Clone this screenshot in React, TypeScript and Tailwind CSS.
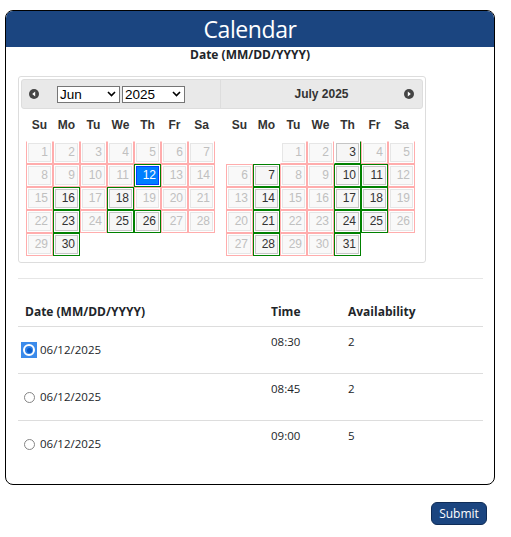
import React from 'react'

type DayKind = 'off' | 'open' | 'selected' | 'plain'

interface MonthData {
  title: string
  startDay: number
  days: number
  open: number[]
  selected?: number
  plain?: number[]
}

const june: MonthData = {
  title: 'June 2025',
  startDay: 0,
  days: 30,
  open: [16, 18, 23, 25, 26, 30],
  selected: 12,
}

const july: MonthData = {
  title: 'July 2025',
  startDay: 2,
  days: 31,
  open: [7, 10, 11, 14, 17, 18, 21, 24, 25, 28, 31],
  plain: [3],
}

const weekDays = ['Su', 'Mo', 'Tu', 'We', 'Th', 'Fr', 'Sa']

const slots = [
  { date: '06/12/2025', time: '08:30', available: 2, checked: true },
  { date: '06/12/2025', time: '08:45', available: 2, checked: false },
  { date: '06/12/2025', time: '09:00', available: 5, checked: false },
]

function NavIcon({ dir }: { dir: 'prev' | 'next' }) {
  return (
    <svg width="12" height="12" viewBox="0 0 12 12">
      <circle cx="6" cy="6" r="5" fill="#454545" />
      {dir === 'prev' ? (
        <polygon points="7.2,3.6 7.2,8.4 4.2,6" fill="#ffffff" />
      ) : (
        <polygon points="4.8,3.6 4.8,8.4 7.8,6" fill="#ffffff" />
      )}
    </svg>
  )
}

function FakeSelect({ value }: { value: string }) {
  return (
    <div className="flex h-[17px] w-[63px] items-center justify-between border border-[#767676] bg-white pl-[2px] pr-[3px] text-[13.5px] leading-[15px] text-black">
      <span>{value}</span>
      <svg width="9" height="6" viewBox="0 0 9 6">
        <polyline points="1,1 4.5,4.5 8,1" fill="none" stroke="#000" strokeWidth="1.6" />
      </svg>
    </div>
  )
}

function DayCell({ day, kind, firstRow, leftEmpty }: { day: number; kind: DayKind; firstRow: boolean; leftEmpty: boolean }) {
  let outer = 'h-[23px] border p-[1px] '
  if (kind === 'off') outer += 'border-[#ffadad]'
  else if (kind === 'plain') outer += 'border-white border-r-[#008000] border-b-[#008000]'
  else outer += 'border-[#008000]'
  if (firstRow && kind === 'off') outer += ' border-t-white'
  if (leftEmpty && kind === 'off') outer += ' border-l-white'

  let inner = 'h-full border pr-[2px] text-right text-[12px] leading-[17px] '
  if (kind === 'off') inner += 'border-[#e6e6e6] bg-[#f9f9f9] text-[#c0c0c0]'
  else if (kind === 'selected') inner += 'border-[#003eff] bg-[#007fff] text-white'
  else inner += 'border-[#c5c5c5] bg-[#f6f6f6] text-[#333333]'

  return (
    <div className={outer}>
      <div className={inner}>{day}</div>
    </div>
  )
}

function MonthGrid({ month }: { month: MonthData }) {
  const cells: (number | null)[] = []
  for (let i = 0; i < month.startDay; i++) cells.push(null)
  for (let d = 1; d <= month.days; d++) cells.push(d)
  while (cells.length % 7 !== 0) cells.push(null)

  const kindOf = (d: number): DayKind => {
    if (month.selected === d) return 'selected'
    if (month.plain?.includes(d)) return 'plain'
    if (month.open.includes(d)) return 'open'
    return 'off'
  }

  return (
    <div className="grid grid-cols-[repeat(7,27px)]">
      {weekDays.map((w) => (
        <div key={w} className="flex h-[32px] items-center justify-center text-[12px] font-bold text-[#333333]">
          {w}
        </div>
      ))}
      {cells.map((d, i) =>
        d === null ? (
          <div key={i} className="h-[23px]" />
        ) : (
          <DayCell
            key={i}
            day={d}
            kind={kindOf(d)}
            firstRow={i < 7}
            leftEmpty={i % 7 !== 0 && cells[i - 1] === null}
          />
        )
      )}
    </div>
  )
}

function DatePicker() {
  return (
    <div className="w-[408px] rounded-[3px] border border-[#dddddd] bg-white p-[2px] [font-family:'Liberation_Sans',Arial,sans-serif]">
      <div className="flex h-[30px] rounded-[3px] border border-[#dddddd] bg-[#e9e9e9]">
        <div className="flex w-[199px] items-center border-r border-[#dddddd] pl-[6px]">
          <NavIcon dir="prev" />
          <div className="ml-[17px] flex gap-[2px]">
            <FakeSelect value="Jun" />
            <FakeSelect value="2025" />
          </div>
        </div>
        <div className="relative flex flex-1 items-center justify-center text-[12px] font-bold text-[#333333]">
          July 2025
          <span className="absolute right-[7px] top-[8px]">
            <NavIcon dir="next" />
          </span>
        </div>
      </div>
      <div className="flex pb-[4px]">
        <div className="w-[200px] pl-[5px]">
          <MonthGrid month={june} />
        </div>
        <div className="flex-1 pl-[5px]">
          <MonthGrid month={july} />
        </div>
      </div>
    </div>
  )
}

function Radio({ checked }: { checked: boolean }) {
  if (checked) {
    return (
      <span className="flex h-[16px] w-[16px] items-center justify-center bg-[#3b8beb]">
        <span className="flex h-[12px] w-[12px] items-center justify-center rounded-full border-2 border-white bg-[#2f7fe4]">
          <span className="h-[5px] w-[5px] rounded-full bg-[#0a5cc7]" />
        </span>
      </span>
    )
  }
  return (
    <span className="flex h-[16px] w-[16px] items-center justify-center">
      <span className="h-[11px] w-[11px] rounded-full border border-[#858585] bg-white" />
    </span>
  )
}

export default function App() {
  return (
    <div className="bg-white font-['Open_Sans','Noto_Sans',sans-serif] text-[#212529]">
      <div className="ml-[5px] mt-[10px] w-[490px] overflow-hidden rounded-[8px] border border-black pb-[16px]">
        <div className="h-[36px] bg-[#1b4580] text-center text-[23px] leading-[37px] tracking-[-0.4px] text-white">
          Calendar
        </div>
        <div className="text-center text-[12px] font-bold leading-[16px]">Date (MM/DD/YYYY)</div>

        <div className="pl-3 pr-[11px]">
          <div className="mt-[13px]">
            <DatePicker />
          </div>

          <div className="mt-[15px] border-t border-[#e6e6e6]" />

          <div className="flex h-[48px] items-end border-b border-[#dddddd] pb-[6px] text-[12px] font-bold leading-[16px]">
            <div className="w-[246px] px-[7px]">Date (MM/DD/YYYY)</div>
            <div className="w-[77px] px-[7px]">Time</div>
            <div className="flex-1 px-[7px]">Availability</div>
          </div>

          {slots.map((s, i) => (
            <div
              key={i}
              className={
                i < slots.length - 1
                  ? 'flex h-[47px] items-start border-b border-[#dddddd] text-[11.5px] leading-[16px]'
                  : 'flex h-[47px] items-start text-[11.5px] leading-[16px]'
              }
            >
              <div className="flex w-[246px] items-center gap-[3px] pl-[3px] pt-[15px]">
                <Radio checked={s.checked} />
                <span>{s.date}</span>
              </div>
              <div className="w-[77px] px-[7px] pt-[7px]">{s.time}</div>
              <div className="flex-1 px-[7px] pt-[7px]">{s.available}</div>
            </div>
          ))}
        </div>
      </div>

      <div className="ml-[5px] mt-[17px] flex w-[490px] justify-end pr-[8px]">
        <button className="h-[23px] w-[56px] rounded-[6px] border border-[#0f2c57] bg-[#1b4580] text-[12px] text-white">
          Submit
        </button>
      </div>
    </div>
  )
}
